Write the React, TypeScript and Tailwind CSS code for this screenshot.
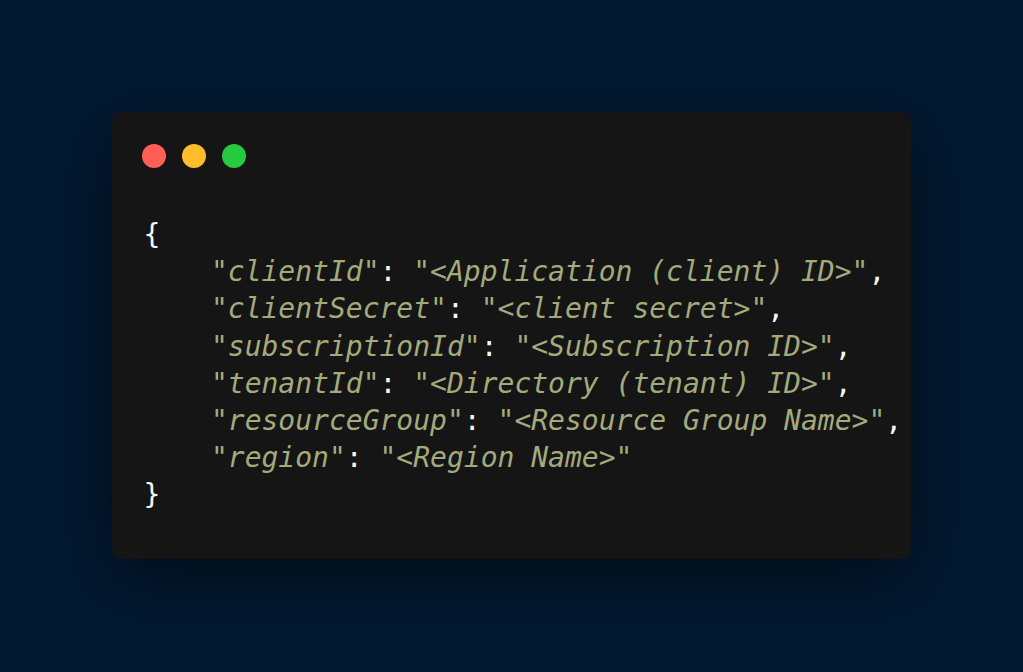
export default function App() {
  const rows = [
    { key: "clientId", value: "<Application (client) ID>", comma: true },
    { key: "clientSecret", value: "<client secret>", comma: true },
    { key: "subscriptionId", value: "<Subscription ID>", comma: true },
    { key: "tenantId", value: "<Directory (tenant) ID>", comma: true },
    { key: "resourceGroup", value: "<Resource Group Name>", comma: true },
    { key: "region", value: "<Region Name>", comma: false },
  ];

  return (
    <div className="w-[1023px] h-[672px] bg-[#031a33] flex items-start justify-center pt-[112px] pr-[1px]">
      <div className="w-[799px] h-[447px] rounded-lg bg-[#151515] px-8 pt-8 shadow-[0_20px_68px_rgba(0,0,0,0.55)]">
        <div className="flex gap-4 -ml-[2px]">
          <span className="w-6 h-6 rounded-full bg-[#ff5f56]" />
          <span className="w-6 h-6 rounded-full bg-[#ffbd2e]" />
          <span className="w-6 h-6 rounded-full bg-[#27c93f]" />
        </div>
        <pre className="mt-[48px] font-['DejaVu_Sans_Mono',monospace] text-[28px] leading-[37.2px] text-[#f7f7f2]">
          <div>{"{"}</div>
          {rows.map((r) => (
            <div key={r.key} className="whitespace-pre">
              {"    "}
              <span className="italic text-[#a3ab7c]">{`"${r.key}"`}</span>
              {": "}
              <span className="italic text-[#a3ab7c]">{`"${r.value}"`}</span>
              {r.comma ? "," : ""}
            </div>
          ))}
          <div>{"}"}</div>
        </pre>
      </div>
    </div>
  );
}
